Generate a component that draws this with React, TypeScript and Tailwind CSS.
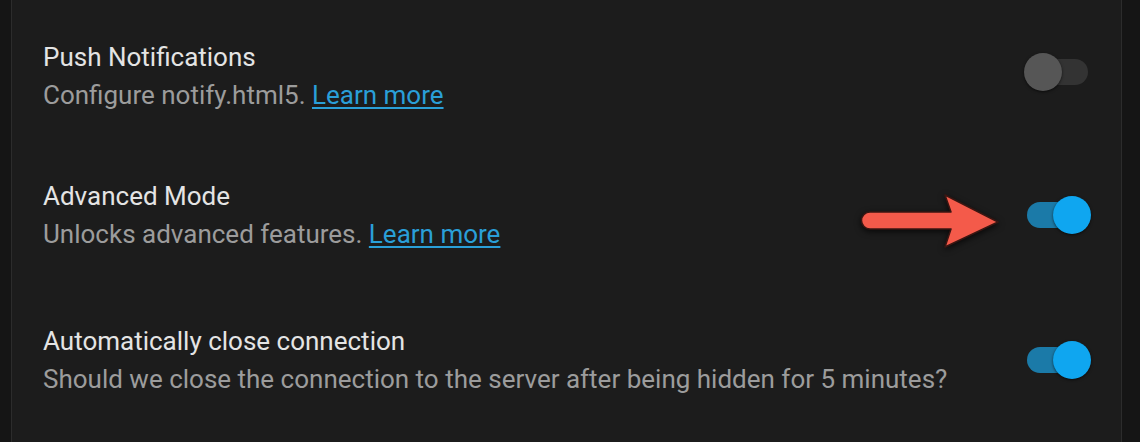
import React from "react";

type Setting = {
  title: string;
  description: string;
  link?: boolean;
  enabled: boolean;
  spacing: string;
};

const settings: Setting[] = [
  {
    title: "Push Notifications",
    description: "Configure notify.html5.",
    link: true,
    enabled: false,
    spacing: "pt-[38px]",
  },
  {
    title: "Advanced Mode",
    description: "Unlocks advanced features.",
    link: true,
    enabled: true,
    spacing: "pt-[63px]",
  },
  {
    title: "Automatically close connection",
    description:
      "Should we close the connection to the server after being hidden for 5 minutes?",
    enabled: true,
    spacing: "pt-[69px]",
  },
];

function Toggle({ on }: { on: boolean }) {
  return (
    <div className={`relative h-[38px] w-[67px] shrink-0 ${on ? "" : "-mt-[8px]"}`}>
      <div
        className={`absolute inset-x-[3px] top-[6px] h-[26px] rounded-full ${
          on ? "bg-[#1b7aa8]" : "bg-[#333333]"
        }`}
      />
      <div
        className={`absolute top-0 h-[38px] w-[38px] rounded-full shadow-[0_1px_3px_rgba(0,0,0,0.6)] ${
          on ? "right-0 bg-[#0fa6f0]" : "left-0 bg-[#565656]"
        }`}
      />
    </div>
  );
}

function SettingRow({ setting }: { setting: Setting }) {
  return (
    <div className={`flex items-center justify-between ${setting.spacing}`}>
      <div className="flex flex-col text-[26px] leading-[38px]">
        <span className="text-[#e4e4e4]">{setting.title}</span>
        <span className="text-[#9c9c9c]">
          {setting.description}
          {setting.link && (
            <>
              {" "}
              <a href="#" className="text-[#2a9fd8] underline underline-offset-[3px]">
                Learn more
              </a>
            </>
          )}
        </span>
      </div>
      <Toggle on={setting.enabled} />
    </div>
  );
}

function Arrow() {
  return (
    <svg
      className="absolute left-[855px] top-[188px] drop-shadow-[0_2px_3px_rgba(0,0,0,0.7)]"
      width="150"
      height="65"
      viewBox="0 0 150 65"
    >
      <path
        d="M15 24 L96 24 L90 7 L143 34 L90 59 L96 41 L15 41 A8.5 8.5 0 0 1 15 24 Z"
        fill="#f45a4a"
        stroke="#3a1612"
        strokeWidth="1.5"
        strokeLinejoin="round"
      />
    </svg>
  );
}

export default function App() {
  return (
    <div
      className="relative h-[442px] w-[1140px] overflow-hidden bg-[#151515]"
      style={{ fontFamily: "Roboto, 'Noto Sans', sans-serif" }}
    >
      <div className="ml-[11px] h-full w-[1111px] border-x border-[#2c2c2c] bg-[#1c1c1c] pl-[31px] pr-[30px]">
        {settings.map((s) => (
          <SettingRow key={s.title} setting={s} />
        ))}
      </div>
      <Arrow />
    </div>
  );
}
